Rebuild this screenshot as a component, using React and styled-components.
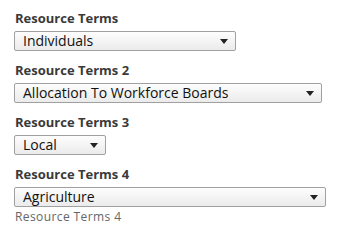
import styled, { createGlobalStyle } from "styled-components";

const GlobalStyle = createGlobalStyle`
  body {
    margin: 0;
    background: #fff;
    font-family: "Open Sans", "Liberation Sans", sans-serif;
  }
`;

const Form = styled.div`
  padding: 10px 14px 0;
  display: flex;
  flex-direction: column;
`;

const Field = styled.div`
  display: flex;
  flex-direction: column;
  align-items: flex-start;
  margin-bottom: 11px;
`;

const Label = styled.label`
  font-size: 13px;
  font-weight: 700;
  line-height: 16px;
  color: #3a3a3a;
  padding-left: 1px;
  margin-bottom: 5px;
`;

const SelectBox = styled.div`
  box-sizing: border-box;
  width: ${(p) => p.$width}px;
  height: 20px;
  display: flex;
  align-items: center;
  justify-content: space-between;
  padding: 0 7px 0 8px;
  border: 1px solid #a0a0a0;
  border-radius: 2px;
  background: linear-gradient(#fdfdfd, #ebebeb);
  font-size: 14px;
  color: #111;
  line-height: 18px;
  cursor: default;
`;

const Arrow = styled.svg`
  width: 8px;
  height: 5px;
  flex-shrink: 0;
`;

const Help = styled.div`
  font-size: 12px;
  color: #666;
  letter-spacing: 0.4px;
  line-height: 16px;
  margin-top: 2px;
  padding-left: 1px;
`;

const fields = [
  { label: "Resource Terms", value: "Individuals", width: 222 },
  { label: "Resource Terms 2", value: "Allocation To Workforce Boards", width: 308 },
  { label: "Resource Terms 3", value: "Local", width: 92 },
  { label: "Resource Terms 4", value: "Agriculture", width: 312, help: "Resource Terms 4" },
];

const Select = ({ value, width }) => (
  <SelectBox $width={width}>
    <span>{value}</span>
    <Arrow viewBox="0 0 8 5">
      <path d="M0 0h8L4 5z" fill="#222" />
    </Arrow>
  </SelectBox>
);

export default function App() {
  return (
    <>
      <GlobalStyle />
      <Form>
        {fields.map((f) => (
          <Field key={f.label}>
            <Label>{f.label}</Label>
            <Select value={f.value} width={f.width} />
            {f.help && <Help>{f.help}</Help>}
          </Field>
        ))}
      </Form>
    </>
  );
}
